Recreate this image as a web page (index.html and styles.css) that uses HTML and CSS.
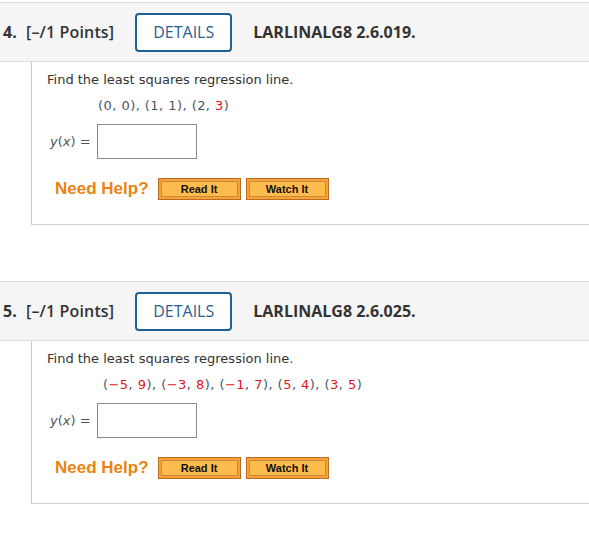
FILE: index.html
```html
<!DOCTYPE html>
<html lang="en">

<head>
  <meta charset="UTF-8">
  <meta name="viewport" content="width=device-width, initial-scale=1.0">
  <title>Questions</title>
  <link rel="stylesheet" href="styles.css">
</head>

<body>

  <div class="question">
    <div class="question-header">
      <span class="q-num">4.</span>
      <span class="q-points">[–/1 Points]</span>
      <button class="details-btn">DETAILS</button>
      <span class="q-ref">LARLINALG8 2.6.019.</span>
    </div>
    <div class="question-body">
      <p class="prompt">Find the least squares regression line.</p>
      <p class="points">(0, 0), (1, 1), (2, <span class="red">3</span>)</p>
      <div class="answer-row">
        <span class="answer-label"><i>y</i>(<i>x</i>) =</span>
        <input type="text" class="answer-input">
      </div>
      <div class="help-row">
        <span class="need-help">Need Help?</span>
        <button class="help-btn">Read It</button>
        <button class="help-btn">Watch It</button>
      </div>
    </div>
  </div>

  <div class="question">
    <div class="question-header">
      <span class="q-num">5.</span>
      <span class="q-points">[–/1 Points]</span>
      <button class="details-btn">DETAILS</button>
      <span class="q-ref">LARLINALG8 2.6.025.</span>
    </div>
    <div class="question-body">
      <p class="prompt">Find the least squares regression line.</p>
      <p class="points points-wide">(<span class="red">−5</span>, <span class="red">9</span>), (<span class="red">−3</span>, <span class="red">8</span>), (<span class="red">−1</span>, <span class="red">7</span>), (<span class="red">5</span>, <span class="red">4</span>), (<span class="red">3</span>, <span class="red">5</span>)</p>
      <div class="answer-row">
        <span class="answer-label"><i>y</i>(<i>x</i>) =</span>
        <input type="text" class="answer-input">
      </div>
      <div class="help-row">
        <span class="need-help">Need Help?</span>
        <button class="help-btn">Read It</button>
        <button class="help-btn">Watch It</button>
      </div>
    </div>
  </div>

</body>

</html>
```

FILE: styles.css
```css
/* Блоки вопросов */
body {
  margin: 0;
  padding: 2px 0 0 0;
  background-color: white;
  font-family: "DejaVu Sans", Verdana, sans-serif;
}

.question {
  margin-bottom: 56px;
}

.question:last-child {
  margin-bottom: 0;
}

.question-header {
  display: flex;
  align-items: center;
  height: 58px;
  padding-left: 3px;
  background-color: #f5f5f5;
  border-top: 1px solid #dcdcdc;
  border-bottom: 1px solid #dcdcdc;
  font-family: "Open Sans", sans-serif;
  font-size: 16px;
  color: #333;
}

.q-num {
  font-weight: 700;
  width: 23px;
}

.q-points {
  font-weight: 600;
  letter-spacing: 0.15px;
}

.details-btn {
  margin: 0 21px 0 21px;
  width: 97px;
  height: 39px;
  background-color: white;
  border: 2px solid #20609a;
  border-radius: 4px;
  font-family: "Open Sans", sans-serif;
  font-size: 16px;
  color: #2a5f8f;
  padding: 0;
}

.q-ref {
  font-weight: 700;
}

.question-body {
  margin-left: 31px;
  border-left: 1px solid #cccccc;
  border-bottom: 1px solid #cccccc;
  padding: 9px 0 24px 15px;
}

.prompt {
  margin: 0;
  font-size: 13px;
  line-height: 18px;
  color: #333;
}

.points {
  margin: 8px 0 0 51px;
  font-size: 13px;
  line-height: 18px;
  letter-spacing: 0.45px;
  color: #4c5566;
}

.points-wide {
  margin-left: 56px;
}

.red {
  color: #e3121c;
}

.answer-row {
  display: flex;
  align-items: center;
  gap: 6px;
  margin-top: 9px;
  padding-left: 3px;
}

.answer-label {
  font-size: 13px;
  color: #555;
}

.answer-input {
  width: 100px;
  height: 35px;
  box-sizing: border-box;
  border: 1px solid #8a8a8a;
  margin: 0;
}

.help-row {
  display: flex;
  align-items: center;
  margin-top: 19px;
  padding-left: 8px;
}

.need-help {
  font-family: "Liberation Sans", Arial, sans-serif;
  font-weight: 700;
  font-size: 17px;
  color: #ea8410;
  margin-right: 9px;
}

.help-btn {
  width: 83px;
  height: 22px;
  margin-right: 5px;
  padding: 0;
  border: 1px solid #b96d1f;
  box-shadow: inset 0 0 0 2px #f8a13a, inset 0 0 0 3px #c98a3a;
  background-color: #ffbb4c;
  font-family: "Liberation Sans", Arial, sans-serif;
  font-weight: 700;
  font-size: 11px;
  color: #111;
}
```
